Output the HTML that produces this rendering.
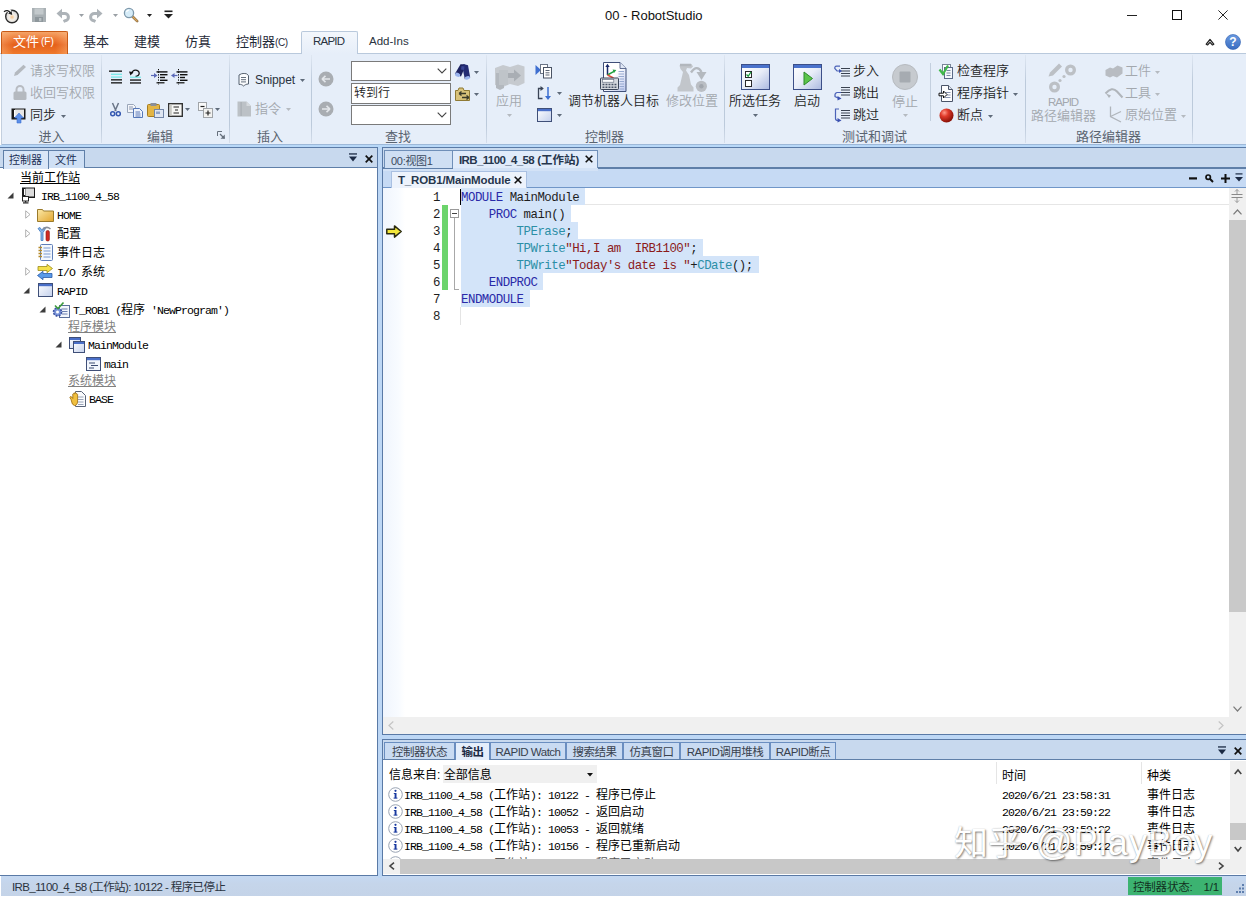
<!DOCTYPE html>
<html lang="zh-CN">
<head>
<meta charset="utf-8">
<title>00 - RobotStudio</title>
<style>
*{box-sizing:border-box;margin:0;padding:0}
html,body{width:1247px;height:897px;overflow:hidden;background:#fff}
body{font-family:"Liberation Sans","Noto Sans CJK SC",sans-serif;font-size:12px;color:#1e1e1e;position:relative}
.abs{position:absolute}
.t{position:absolute;white-space:nowrap;line-height:1}
svg{position:absolute;overflow:visible}
/* title */
#title{left:0;top:0;width:1247px;height:30px;background:#fff}
#tabsrow{left:0;top:30px;width:1247px;height:24px;background:#fff}
#ribbon{left:0;top:53px;width:1247px;height:92px;background:#e6eef9;border-top:1px solid #b9c9dc;border-bottom:1px solid #9db8d8}
.rsep{position:absolute;top:55px;width:1px;height:88px;background:linear-gradient(180deg,#dfe7f2,#bccadb 30%,#bccadb 80%,#d5deeb)}
.glabel{position:absolute;top:130px;font-size:13px;color:#5a6470;line-height:1;white-space:nowrap;transform:translateX(-50%)}
.rt{position:absolute;white-space:nowrap;line-height:1;font-size:13px;color:#1e1e1e;font-weight:350}
.dis{color:#a3a8ae}
/* frame */
#frame{left:0;top:145px;width:1247px;height:752px;background:#bdd7f5}
.mono{font-family:"Liberation Mono","Noto Sans CJK SC",monospace}
.tree{font-family:"Liberation Mono","Noto Sans CJK SC",monospace;font-size:11.5px;color:#000;position:absolute;white-space:nowrap;line-height:1;letter-spacing:-0.9px}
.tree .c,.orow .c{font-size:12px;letter-spacing:0}
.code{position:absolute;left:461px;height:17px;line-height:17px;font-family:"Liberation Mono",monospace;font-size:12.4px;letter-spacing:-0.49px;white-space:pre;color:#1e1e1e}
.code .x{position:relative;top:2px}
.code span.s{background:#d3e4f9;display:inline-block;height:17px;padding-right:6px}
.kw{color:#2a2aa8}.fn{color:#2b8fa6}.str{color:#8b1a1a}
.ln{position:absolute;left:420px;width:20px;text-align:right;height:17px;line-height:21px;font-family:"Liberation Mono",monospace;font-size:12.4px;letter-spacing:-0.49px;color:#1e1e1e}
.otab{position:absolute;top:742px;height:17px;padding-top:2px;border:1px solid #6a8ec0;border-bottom:none;background:#c9dbf2;font-size:11.5px;color:#39424e;line-height:15px;text-align:center;white-space:nowrap;letter-spacing:-0.5px}
.orow{position:absolute;left:404px;font-family:"Liberation Mono","Noto Sans CJK SC",monospace;font-size:11.5px;letter-spacing:-0.9px;white-space:pre;line-height:1;color:#000}
</style>
</head>
<body>
<div id="title" class="abs"></div>
<div id="tabsrow" class="abs"></div>
<div id="ribbon" class="abs"></div>
<div id="frame" class="abs"></div>
<!--TITLE-->
<svg style="left:3px;top:7px" width="18" height="18" viewBox="0 0 18 18"><defs><radialGradient id="lg" cx="50%" cy="55%" r="50%"><stop offset="0" stop-color="#f6c48a"/><stop offset="0.45" stop-color="#f4efe8"/><stop offset="1" stop-color="#d8d8d8"/></radialGradient></defs><circle cx="9" cy="9.5" r="6.3" fill="url(#lg)" stroke="#2b2b2b" stroke-width="1.4"/><path d="M1.5 4.5 Q5 1.5 8.5 6.5" fill="none" stroke="#fff" stroke-width="3.4"/><path d="M1 4.8 Q4.5 1.8 7.6 6" fill="none" stroke="#222" stroke-width="1.3"/><path d="M5.2 6.6 L9.2 8 L8.6 3.9 Z" fill="#222"/></svg>
<svg style="left:32px;top:8px" width="14" height="14" viewBox="0 0 14 14"><rect x="0" y="0" width="14" height="14" fill="#a9b0b4"/><rect x="2.5" y="0.5" width="9" height="6" fill="#c3c9cc"/><rect x="3" y="9" width="8" height="5" fill="#8e979c"/><rect x="7" y="10" width="2.4" height="3.2" fill="#b9c0c4"/></svg>
<svg style="left:56px;top:8px" width="14" height="14" viewBox="0 0 14 14"><path d="M4 5.5H8.5A3.6 3.6 0 0 1 9 12.8L7.5 13.5" fill="none" stroke="#adb3b8" stroke-width="3"/><path d="M0.5 5.5L6 0.8V10.5Z" fill="#adb3b8"/></svg>
<svg style="left:79px;top:14px" width="5" height="3" viewBox="0 0 7 4"><path d="M0 0H7L3.5 4Z" fill="#9aa0a5"/></svg>
<svg style="left:89px;top:8px" width="14" height="14" viewBox="0 0 14 14"><path d="M10 5.5H5.5A3.6 3.6 0 0 0 5 12.8L6.5 13.5" fill="none" stroke="#adb3b8" stroke-width="3"/><path d="M13.5 5.5L8 0.8V10.5Z" fill="#adb3b8"/></svg>
<svg style="left:113px;top:14px" width="5" height="3" viewBox="0 0 7 4"><path d="M0 0H7L3.5 4Z" fill="#9aa0a5"/></svg>
<svg style="left:123px;top:7px" width="16" height="16" viewBox="0 0 16 16"><path d="M9 9 L14.2 14.2" stroke="#8a6d45" stroke-width="2.6" stroke-linecap="round"/><path d="M9 9 L14 14" stroke="#d9a55c" stroke-width="1.2" stroke-linecap="round"/><circle cx="6" cy="6" r="4.6" fill="#d6ecf8" stroke="#7d98ab" stroke-width="1.3"/><path d="M3.5 5 A3 3 0 0 1 6 3" stroke="#fff" stroke-width="1.2" fill="none"/></svg>
<svg style="left:147px;top:14px" width="5" height="3" viewBox="0 0 7 4"><path d="M0 0H7L3.5 4Z" fill="#222"/></svg>
<svg style="left:164px;top:10px" width="9" height="9" viewBox="0 0 9 9"><rect x="0.5" y="0.5" width="8" height="1.6" fill="#222"/><path d="M0 4H9L4.5 8.5Z" fill="#222"/></svg>
<div class="t" style="left:605px;top:9px;font-size:13px;color:#111">00 - RobotStudio</div>
<div class="abs" style="left:1127px;top:15px;width:10px;height:1px;background:#222"></div>
<svg style="left:1172px;top:10px" width="10" height="10" viewBox="0 0 10 10"><rect x="0.5" y="0.5" width="9" height="9" fill="none" stroke="#111" stroke-width="1"/></svg>
<svg style="left:1218px;top:10px" width="10" height="10" viewBox="0 0 12 12"><path d="M0.5 0.5L11.5 11.5M11.5 0.5L0.5 11.5" stroke="#111" stroke-width="1.1"/></svg>

<!--TABS-->
<div class="abs" style="left:1px;top:31px;width:67px;height:23px;border:1px solid #c85a16;border-bottom:none;border-radius:2px 2px 0 0;background:linear-gradient(90deg,rgba(255,200,150,0.35),rgba(255,200,150,0) 18%,rgba(255,200,150,0) 82%,rgba(255,200,150,0.35)),linear-gradient(180deg,#f5a468 0%,#ee7d3a 30%,#e5601a 58%,#ef7a2c 100%)"></div>
<div class="t" style="left:13px;top:35px;font-size:13px;color:#fff">文件</div>
<div class="t" style="left:41px;top:37px;font-size:10px;color:#fff">(F)</div>
<div class="t" style="left:83px;top:35px;font-size:13px;color:#1f2a38">基本</div>
<div class="t" style="left:134px;top:35px;font-size:13px;color:#1f2a38">建模</div>
<div class="t" style="left:185px;top:35px;font-size:13px;color:#1f2a38">仿真</div>
<div class="t" style="left:236px;top:35px;font-size:13px;color:#1f2a38">控制器<span style="font-size:10px;font-family:'Liberation Sans',sans-serif;letter-spacing:-0.4px">(C)</span></div>
<div class="abs" style="left:301px;top:31px;width:57px;height:23px;border:1px solid #b9c9dc;border-bottom:none;border-radius:2px 2px 0 0;background:linear-gradient(180deg,#f3f7fc,#e6eef9)"></div>
<div class="t" style="left:313px;top:36px;font-size:11.5px;color:#2a3340;letter-spacing:-0.8px">RAPID</div>
<div class="t" style="left:369px;top:36px;font-size:11.5px;color:#2a3340">Add-Ins</div>
<svg style="left:1205px;top:38px" width="10" height="8" viewBox="0 0 10 8"><path d="M1.2 6.2L5 1.5L8.8 6.2L7.5 7L5 4.3L2.5 7Z" fill="#fff" stroke="#222" stroke-width="1.2" stroke-linejoin="round"/></svg>
<svg style="left:1225px;top:34px" width="16" height="16" viewBox="0 0 16 16"><defs><linearGradient id="hg" x1="0" y1="0" x2="0" y2="1"><stop offset="0" stop-color="#6a9ae0"/><stop offset="1" stop-color="#3a6cc0"/></linearGradient></defs><circle cx="8" cy="8" r="7.5" fill="url(#hg)" stroke="#2a5db0" stroke-width="0.6"/><text x="8" y="12.3" text-anchor="middle" font-family="Liberation Sans, sans-serif" font-weight="bold" font-size="12" fill="#fff">?</text></svg>

<!--RIBBON-->
<div class="rsep" style="left:101px"></div>
<div class="rsep" style="left:229px"></div>
<div class="rsep" style="left:311px"></div>
<div class="rsep" style="left:486px"></div>
<div class="rsep" style="left:724px"></div>
<div class="rsep" style="left:1025px"></div>
<div class="rsep" style="left:1192px"></div>
<div class="abs" style="left:930px;top:63px;width:1px;height:58px;background:#c3cfde"></div>
<div class="abs" style="left:1px;top:54px;width:1px;height:91px;background:#c3cfde"></div>
<div class="glabel" style="left:51.5px">进入</div>
<div class="glabel" style="left:160px">编辑</div>
<div class="glabel" style="left:270px">插入</div>
<div class="glabel" style="left:398px">查找</div>
<div class="glabel" style="left:604.5px">控制器</div>
<div class="glabel" style="left:874.5px">测试和调试</div>
<div class="glabel" style="left:1108.5px">路径编辑器</div>
<svg style="left:13px;top:64px" width="14" height="13" viewBox="0 0 14 13"><path d="M1 12L2 8.5L10.5 0.8L13 3L4.5 11Z" fill="#b4b9bf"/></svg>
<div class="rt dis" style="left:30px;top:64px">请求写权限</div>
<svg style="left:13px;top:85px" width="14" height="15" viewBox="0 0 14 15"><path d="M3.5 7V4.5A3.5 3.5 0 0 1 10.5 4.5V7" fill="none" stroke="#b8bcc2" stroke-width="2"/><rect x="0.5" y="6.5" width="13" height="8.5" rx="1.5" fill="#b4b9bf"/></svg>
<div class="rt dis" style="left:30px;top:86px">收回写权限</div>
<svg style="left:11px;top:108px" width="15" height="16" viewBox="0 0 15 16"><rect x="0.5" y="0.5" width="14" height="11" fill="#1a1a1a"/><rect x="4" y="1.5" width="9" height="8" fill="#e6e6e6"/><rect x="3" y="2" width="1.2" height="7" fill="#fff"/><path d="M8 5L12.5 10H10V15H6V10H3.5Z" fill="#5b8fe8" stroke="#3d6fd0" stroke-width="0.6"/></svg>
<div class="rt" style="left:30px;top:108px">同步</div>
<svg style="left:61px;top:115px" width="5" height="3" viewBox="0 0 5 3"><path d="M0 0H5L2.5 3Z" fill="#5f6b7a"/></svg>
<svg style="left:109px;top:70px" width="14" height="14" viewBox="0 0 14 14"><rect x="0" y="0.5" width="13" height="1.3" fill="#111"/><rect x="2" y="3.6" width="11" height="1.4" fill="#7fe9e9"/><rect x="2" y="6.4" width="11" height="1.4" fill="#7fe9e9"/><rect x="2" y="9.2" width="11" height="1.3" fill="#111"/><rect x="2" y="12.2" width="11" height="1.3" fill="#111"/></svg>
<svg style="left:129px;top:69px" width="13" height="15" viewBox="0 0 13 15"><path d="M3 4.5A3.6 3.2 0 1 1 6.5 7.5" fill="none" stroke="#111" stroke-width="1.3"/><path d="M0 2.5L4.5 3L1.5 6.5Z" fill="#111"/><rect x="1" y="7.6" width="11" height="1.3" fill="#7fe9e9"/><rect x="1" y="10.4" width="11" height="1.3" fill="#111"/><rect x="1" y="13.3" width="11" height="1.3" fill="#111"/></svg>
<svg style="left:151px;top:69px" width="17" height="16" viewBox="0 0 17 16"><path d="M0 6.5H4" stroke="#5a68b8" stroke-width="1.2"/><path d="M3 4L6.5 6.5L3 9Z" fill="#5a68b8"/><path d="M7.5 0V16" stroke="#111" stroke-width="1" stroke-dasharray="1.3 1.3"/><rect x="5.5" y="2.2" width="11" height="1.4" fill="#111"/><rect x="9" y="5" width="7.5" height="1.4" fill="#111"/><rect x="9" y="7.8" width="5" height="1.4" fill="#111"/><rect x="9" y="10.6" width="7.5" height="1.4" fill="#111"/><rect x="5.5" y="13.2" width="8" height="1.2" fill="#111"/></svg>
<svg style="left:171px;top:69px" width="17" height="16" viewBox="0 0 17 16"><path d="M2.5 6.5H6.5" stroke="#5a68b8" stroke-width="1.2"/><path d="M3.5 4L0 6.5L3.5 9Z" fill="#5a68b8"/><path d="M7.5 0V16" stroke="#111" stroke-width="1" stroke-dasharray="1.3 1.3"/><rect x="5.5" y="2.2" width="11" height="1.4" fill="#111"/><rect x="9" y="5" width="7.5" height="1.4" fill="#111"/><rect x="9" y="7.8" width="5" height="1.4" fill="#111"/><rect x="9" y="10.6" width="7.5" height="1.4" fill="#111"/><rect x="5.5" y="13.2" width="8" height="1.2" fill="#111"/></svg>
<svg style="left:110px;top:103px" width="11" height="14" viewBox="0 0 11 14"><path d="M2.5 0L6 8M8.5 0L5 8" stroke="#6b7688" stroke-width="1.5" fill="none"/><circle cx="2.7" cy="10.8" r="2" fill="none" stroke="#3558b0" stroke-width="1.5"/><circle cx="8.3" cy="10.8" r="2" fill="none" stroke="#3558b0" stroke-width="1.5"/></svg>
<svg style="left:127px;top:104px" width="16" height="14" viewBox="0 0 16 14"><path d="M0.5 0.5H6.5L8.5 2.5V8.5H0.5Z" fill="#f4f6fa" stroke="#9aa6ba" stroke-width="1"/><path d="M2 3H6M2 5H7" stroke="#7f8da8" stroke-width="0.9"/><path d="M6.5 4.5H12.5L15.5 7.5V13.5H6.5Z" fill="#eef3fb" stroke="#5577b8" stroke-width="1"/><path d="M8.5 8H13M8.5 10H13.5M8.5 12H13.5" stroke="#4a6cb0" stroke-width="0.9"/></svg>
<svg style="left:147px;top:103px" width="17" height="15" viewBox="0 0 17 15"><rect x="0.5" y="1.5" width="12" height="12" rx="1" fill="#e3b545" stroke="#a67c1f" stroke-width="1"/><rect x="3.5" y="0" width="6" height="3" fill="#8b8f99"/><rect x="7.5" y="6.5" width="9" height="8" fill="#dfe6f2" stroke="#7386a8" stroke-width="1"/><rect x="9" y="8.5" width="4" height="2.5" fill="#8fa3c8"/></svg>
<svg style="left:168px;top:103px" width="15" height="14" viewBox="0 0 15 14"><rect x="0.7" y="0.7" width="13.6" height="12.6" fill="#f6f6f4" stroke="#333" stroke-width="1.4"/><rect x="1.4" y="1.4" width="2.4" height="11.2" fill="#c9c9c4"/><path d="M5.5 4H11M7 7H10M5.5 10H11" stroke="#222" stroke-width="1.2"/></svg>
<svg style="left:198px;top:102px" width="15" height="16" viewBox="0 0 15 16"><rect x="0.5" y="0.5" width="8" height="8" fill="#fafafa" stroke="#a0a4a8" stroke-width="1"/><path d="M2.5 4.5H6.5" stroke="#222" stroke-width="1.2"/><rect x="5.5" y="6.5" width="9" height="9" fill="#f2f2f0" stroke="#a0a4a8" stroke-width="1"/><path d="M7.5 11H12.5M10 8.5V13.5" stroke="#222" stroke-width="1.2"/></svg>
<svg style="left:217px;top:131px" width="8" height="8" viewBox="0 0 8 8"><path d="M0.5 5V0.5H5" fill="none" stroke="#66707c" stroke-width="1"/><path d="M3 3L7.5 7.5" stroke="#66707c" stroke-width="1.2"/><path d="M7.8 3.5V7.8H3.5Z" fill="#66707c"/></svg>
<svg style="left:185px;top:108px" width="5" height="3" viewBox="0 0 5 3"><path d="M0 0H5L2.5 3Z" fill="#5f6b7a"/></svg>
<svg style="left:215px;top:108px" width="5" height="3" viewBox="0 0 5 3"><path d="M0 0H5L2.5 3Z" fill="#5f6b7a"/></svg>
<svg style="left:238px;top:73px" width="12" height="14" viewBox="0 0 12 14"><path d="M2 1.5C3.5 0.3 6.5 0.3 8.5 0.8L10.5 2.5V11C8 11 7 12 5.5 13C4.5 12 3 11 1 11.5V2C1.3 1.8 1.6 1.7 2 1.5Z" fill="#fbfcfe" stroke="#55606e" stroke-width="1"/><path d="M3 4.5H8M3 6.7H8M3 8.9H8" stroke="#55606e" stroke-width="0.9"/></svg>
<div class="rt" style="left:255px;top:74px;font-size:12px;color:#2a3340;letter-spacing:-0.1px">Snippet</div>
<svg style="left:237px;top:101px" width="15" height="16" viewBox="0 0 15 16"><path d="M0.5 0.5H9.5L14 5V15.5H0.5Z" fill="#bcc1c6"/><path d="M9.5 0.5V5H14Z" fill="#d5d9dd"/><rect x="3.5" y="1" width="1.2" height="14" fill="#a9aeb4"/></svg>
<div class="rt dis" style="left:255px;top:102px">指令</div>
<svg style="left:300px;top:79px" width="5" height="3" viewBox="0 0 5 3"><path d="M0 0H5L2.5 3Z" fill="#5f6b7a"/></svg>
<svg style="left:286px;top:108px" width="5" height="3" viewBox="0 0 5 3"><path d="M0 0H5L2.5 3Z" fill="#b5bac0"/></svg>
<svg style="left:318px;top:71px" width="16" height="16" viewBox="0 0 16 16"><circle cx="8" cy="8" r="7.5" fill="#a9adb2"/><path d="M4 8H12M4 8L7.5 4.8M4 8L7.5 11.2" stroke="#e3e6ea" stroke-width="1.6" fill="none"/></svg>
<svg style="left:318px;top:101px" width="16" height="16" viewBox="0 0 16 16"><circle cx="8" cy="8" r="7.5" fill="#a9adb2"/><path d="M4 8H12M12 8L8.5 4.8M12 8L8.5 11.2" stroke="#e3e6ea" stroke-width="1.6" fill="none"/></svg>
<div class="abs" style="left:351px;top:61px;width:100px;height:20px;background:#fff;border:1px solid #7a7a7a"></div>
<div class="abs" style="left:351px;top:83px;width:100px;height:21px;background:#fff;border:1px solid #7a7a7a"></div>
<div class="abs" style="left:351px;top:105px;width:100px;height:20px;background:#fff;border:1px solid #7a7a7a"></div>
<div class="rt" style="left:354px;top:87px;font-size:12px;color:#222">转到行</div>
<svg style="left:437px;top:68px" width="10" height="6" viewBox="0 0 10 6"><path d="M0.7 0.7L5 5L9.3 0.7" fill="none" stroke="#444" stroke-width="1.1"/></svg>
<svg style="left:437px;top:112px" width="10" height="6" viewBox="0 0 10 6"><path d="M0.7 0.7L5 5L9.3 0.7" fill="none" stroke="#444" stroke-width="1.1"/></svg>
<svg style="left:454px;top:63px" width="17" height="17" viewBox="0 0 17 17"><path d="M6.5 1.2L10.5 1.2L11 4L7 13.5L0.8 11Z" fill="#1c2260"/><path d="M9.5 1L14 2.2L16.2 14.5L10.8 16.2L9 7Z" fill="#232b74"/><path d="M7.5 3L10.5 3.5L10 7L7 6.5Z" fill="#3a4596"/><ellipse cx="3.6" cy="11.8" rx="2.7" ry="2" transform="rotate(25 3.6 11.8)" fill="#9ab4ee"/><ellipse cx="13.4" cy="14.9" rx="2.6" ry="1.7" transform="rotate(-12 13.4 14.9)" fill="#9ab4ee"/></svg>
<svg style="left:455px;top:87px" width="15" height="14" viewBox="0 0 15 14"><path d="M0.5 3.5H3L4 1H8L9 3.5H14.5V13.5H0.5Z" fill="#d8c27a" stroke="#8f7a35" stroke-width="1"/><path d="M4 6.5H11M4 6.5L6.5 4.5M4 6.5L6.5 8.5" stroke="#3a3a2a" stroke-width="1.3" fill="none"/><path d="M7 10.5H14M14 10.5L11.5 8.5M14 10.5L11.5 12.5" stroke="#3a3a2a" stroke-width="1.3" fill="none"/></svg>
<svg style="left:474px;top:71px" width="5" height="3" viewBox="0 0 5 3"><path d="M0 0H5L2.5 3Z" fill="#5f6b7a"/></svg>
<svg style="left:474px;top:93px" width="5" height="3" viewBox="0 0 5 3"><path d="M0 0H5L2.5 3Z" fill="#5f6b7a"/></svg>
<svg style="left:494px;top:64px" width="31" height="27" viewBox="0 0 31 27"><path d="M1 4L9 1L16 3L24 0.5L30.5 2.5V19L24 22L16 20L9 23L1 21Z" fill="#c6cacf"/><path d="M2 9H10V24L6 26L2 24Z" fill="#b3b8be"/><path d="M5 6H14V21H5Z" fill="#bfc4c9"/><path d="M14 9H20V5.5L27 11.5L20 17.5V14H14Z" fill="#a9aeb4"/></svg>
<div class="rt dis" style="left:496px;top:94px">应用</div>
<svg style="left:506.5px;top:114px" width="5" height="3" viewBox="0 0 5 3"><path d="M0 0H5L2.5 3Z" fill="#b5bac0"/></svg>
<svg style="left:535px;top:64px" width="18" height="15" viewBox="0 0 18 15"><path d="M0.5 1L6 6L0.5 11Z" fill="#3f6fd0"/><rect x="5.5" y="0.5" width="7" height="9" fill="#fff" stroke="#6a7486" stroke-width="1"/><rect x="8.5" y="3.5" width="8" height="10.5" fill="#fff" stroke="#4a5364" stroke-width="1"/><path d="M10.5 6.5H14.5M10.5 8.8H14.5M10.5 11H14.5" stroke="#4a5364" stroke-width="0.9"/></svg>
<svg style="left:537px;top:86px" width="15" height="15" viewBox="0 0 15 15"><path d="M5.5 2.5H1.5V12.5H5.5" fill="none" stroke="#3a4456" stroke-width="1.3"/><path d="M3.5 0L6.8 2.5L3.5 5Z" fill="#3a4456"/><path d="M11 1V12" stroke="#3d6fd0" stroke-width="1.5"/><path d="M8 10L11 14L14 10Z" fill="#3d6fd0"/></svg>
<svg style="left:537px;top:108px" width="15" height="14" viewBox="0 0 15 14"><defs><linearGradient id="wg" x1="0" y1="0" x2="1" y2="1"><stop offset="0" stop-color="#fff"/><stop offset="1" stop-color="#c3d0ec"/></linearGradient></defs><rect x="0.5" y="0.5" width="14" height="13" fill="url(#wg)" stroke="#3f4f78" stroke-width="1"/><rect x="1" y="1" width="13" height="2.2" fill="#4a6fc8"/></svg>
<svg style="left:557px;top:92px" width="5" height="3" viewBox="0 0 5 3"><path d="M0 0H5L2.5 3Z" fill="#5f6b7a"/></svg>
<svg style="left:557px;top:114px" width="5" height="3" viewBox="0 0 5 3"><path d="M0 0H5L2.5 3Z" fill="#5f6b7a"/></svg>
<svg style="left:599px;top:62px" width="28" height="31" viewBox="0 0 28 31"><defs><linearGradient id="pg" x1="0" y1="0" x2="1" y2="1"><stop offset="0.45" stop-color="#ffffff"/><stop offset="1" stop-color="#b9c6ee"/></linearGradient></defs><path d="M4.5 0.5H21L27 6.5V29.5H4.5Z" fill="url(#pg)" stroke="#3f4f78" stroke-width="1"/><path d="M21 0.5V6.5H27" fill="#dfe7f5" stroke="#3f4f78" stroke-width="0.8"/><path d="M19.5 9.5H25M19.5 12H25M19.5 14.5H25M20.5 17H25M20.5 19.5H25M20.5 22H25M20.5 24.5H25M20.5 27H25" stroke="#8fa3cc" stroke-width="0.9"/><path d="M8.5 13V4" stroke="#1a2a6a" stroke-width="1.5"/><path d="M6.3 5L8.5 1.8L10.7 5Z" fill="#1a2a6a"/><path d="M8.5 13L15 9.3" stroke="#22a040" stroke-width="1.5"/><path d="M13.6 7.5L17.3 8L15 11Z" fill="#22a040"/><path d="M8.5 13L14.5 16" stroke="#e04a3a" stroke-width="1.4"/><rect x="1.5" y="16" width="18" height="11.5" rx="0.8" fill="#d4d8de" stroke="#3a4458" stroke-width="1"/><rect x="3.3" y="17.6" width="11.5" height="2.6" fill="#fafbfd" stroke="#5a6478" stroke-width="0.6"/><path d="M3.5 22.6H17.5M3.5 25.2H17.5" stroke="#4a5468" stroke-width="1.5" stroke-dasharray="1.9 1.1"/></svg>
<div class="rt" style="left:568px;top:94px">调节机器人目标</div>
<svg style="left:676px;top:63px" width="33" height="30" viewBox="0 0 33 30"><path d="M1.5 28.5V24.5L4 22L7 9L4.5 6L3.5 2.5L6 1L15.5 1L17 3.5L15 5.5L11 5L10 7.5L13 12L15 21.5L17.5 24.5V28.5Z" fill="#c2c6cb"/><path d="M4 2H15" stroke="#b2b7bd" stroke-width="2.5"/><path d="M15 9.5Q21 1 25.5 9" fill="none" stroke="#b4b9bf" stroke-width="2.4"/><path d="M20.5 9L30.5 9L25.5 17Z" fill="#b4b9bf"/><circle cx="25.4" cy="23.3" r="5.6" fill="#babec4"/><circle cx="25.4" cy="23.3" r="2.2" fill="#a2a7ae"/></svg>
<div class="rt dis" style="left:666px;top:94px">修改位置</div>
<svg style="left:741px;top:64px" width="29" height="26" viewBox="0 0 29 26"><defs><linearGradient id="tg" x1="0" y1="0" x2="1" y2="1"><stop offset="0" stop-color="#fff"/><stop offset="0.5" stop-color="#e8edf8"/><stop offset="1" stop-color="#aab9e0"/></linearGradient></defs><rect x="0.5" y="0.5" width="28" height="25" fill="url(#tg)" stroke="#3c4f88" stroke-width="1"/><rect x="1" y="1" width="27" height="3" fill="#4a72cc"/><rect x="4.5" y="7.5" width="6" height="6" fill="#fff" stroke="#2a2a2a" stroke-width="1"/><path d="M5.5 10.5L7.2 12.3L10 8" stroke="#1a9a3a" stroke-width="1.3" fill="none"/><rect x="4.5" y="16.5" width="6" height="6" fill="#fff" stroke="#2a2a2a" stroke-width="1"/></svg>
<div class="rt" style="left:729px;top:94px">所选任务</div>
<svg style="left:752.5px;top:114px" width="5" height="3" viewBox="0 0 5 3"><path d="M0 0H5L2.5 3Z" fill="#5f6b7a"/></svg>
<svg style="left:793px;top:64px" width="29" height="26" viewBox="0 0 29 26"><rect x="0.5" y="0.5" width="28" height="25" fill="url(#tg)" stroke="#3c4f88" stroke-width="1"/><rect x="1" y="1" width="27" height="3" fill="#4a72cc"/><path d="M11 8L19.5 14.5L11 21Z" fill="#5cc44a" stroke="#2c8a2a" stroke-width="1"/></svg>
<div class="rt" style="left:794px;top:94px">启动</div>
<svg style="left:834px;top:64px" width="17" height="14" viewBox="0 0 17 14"><path d="M7 4.5H16M7 7H16M7 9.5H16M7 12H16" stroke="#3a4250" stroke-width="1"/><path d="M6 2.2H2.5Q0.5 2.2 0.8 4.5L3 7H6.5" fill="none" stroke="#4b62b8" stroke-width="1.2"/><path d="M5 5L8 7L5 9Z" fill="#3a50b0"/></svg>
<div class="rt" style="left:853px;top:64px">步入</div>
<svg style="left:834px;top:86px" width="17" height="15" viewBox="0 0 17 15"><path d="M7 1.5H16M7 4H16M7 6.5H16M7 9H16" stroke="#3a4250" stroke-width="1"/><path d="M7 6.5H3Q0.5 7 1 10.5L4 12" fill="none" stroke="#4b62b8" stroke-width="1.2"/><path d="M3.5 10L7.5 12.5L3.5 14.5Z" fill="#3a50b0"/></svg>
<div class="rt" style="left:853px;top:86px">跳出</div>
<svg style="left:834px;top:108px" width="17" height="15" viewBox="0 0 17 15"><path d="M7 2.5H16M7 5H16M7 7.5H16M7 10H16" stroke="#3a4250" stroke-width="1"/><path d="M5 1H1.5V10.5Q1.5 12.5 4 12.5" fill="none" stroke="#4b62b8" stroke-width="1.2"/><path d="M3.5 10L7.5 12.5L3.5 14.5Z" fill="#3a50b0"/></svg>
<div class="rt" style="left:853px;top:108px">跳过</div>
<svg style="left:892px;top:64px" width="26" height="26" viewBox="0 0 26 26"><circle cx="13" cy="13" r="12.5" fill="#c6cacf" stroke="#b6babf" stroke-width="1"/><rect x="7.5" y="7.5" width="11" height="11" rx="1" fill="#a6abb1"/></svg>
<div class="rt dis" style="left:892px;top:95px">停止</div>
<svg style="left:902.5px;top:114px" width="5" height="3" viewBox="0 0 5 3"><path d="M0 0H5L2.5 3Z" fill="#b5bac0"/></svg>
<svg style="left:939px;top:64px" width="14" height="15" viewBox="0 0 14 15"><rect x="3.5" y="0.5" width="8" height="10" fill="#fff" stroke="#7a8698" stroke-width="1"/><rect x="5.5" y="3.5" width="8" height="11" fill="#f4f7fc" stroke="#5a6a88" stroke-width="1"/><path d="M7.5 6.5H11.5M7.5 9H11.5M7.5 11.5H11.5" stroke="#6a7a98" stroke-width="0.9"/><path d="M0.5 5.5L4 10L9 1.5" fill="none" stroke="#3fb84a" stroke-width="2.2"/></svg>
<div class="rt" style="left:957px;top:64px">检查程序</div>
<svg style="left:939px;top:85px" width="14" height="17" viewBox="0 0 14 17"><path d="M2.5 0.5H9.5L13.5 4.5V16.5H2.5Z" fill="#fdfdfe" stroke="#4a5468" stroke-width="1"/><path d="M9.5 0.5V4.5H13.5" fill="#e0e6f0" stroke="#4a5468" stroke-width="1"/><path d="M6 7.5H11.5M6 10H11.5M6 12.5H11.5" stroke="#7a88a8" stroke-width="0.9"/><path d="M0 8.2H4.5V6L8 9.5L4.5 13V10.8H0Z" fill="#fff" stroke="#111" stroke-width="1"/></svg>
<div class="rt" style="left:957px;top:86px">程序指针</div>
<svg style="left:939px;top:108px" width="15" height="15" viewBox="0 0 15 15"><defs><radialGradient id="rb" cx="35%" cy="30%" r="70%"><stop offset="0" stop-color="#ff9a8a"/><stop offset="0.4" stop-color="#e03a2a"/><stop offset="1" stop-color="#8a1208"/></radialGradient></defs><circle cx="7.5" cy="7.5" r="7" fill="url(#rb)"/></svg>
<div class="rt" style="left:957px;top:108px">断点</div>
<svg style="left:1013px;top:93px" width="5" height="3" viewBox="0 0 5 3"><path d="M0 0H5L2.5 3Z" fill="#5f6b7a"/></svg>
<svg style="left:988px;top:115px" width="5" height="3" viewBox="0 0 5 3"><path d="M0 0H5L2.5 3Z" fill="#5f6b7a"/></svg>
<svg style="left:1048px;top:63px" width="30" height="30" viewBox="0 0 30 30"><circle cx="22.5" cy="7" r="5.5" fill="#bcc0c5"/><circle cx="22.5" cy="7" r="2.2" fill="#e6eef9"/><circle cx="6.5" cy="24" r="5.5" fill="#bcc0c5"/><circle cx="6.5" cy="24" r="2.2" fill="#e6eef9"/><circle cx="12" cy="17.5" r="1.6" fill="#bcc0c5"/><circle cx="16" cy="13.5" r="1.6" fill="#bcc0c5"/><path d="M0.5 13.5L2 9.5L11 0.5L14 3.5L5 12.5Z" fill="#bcc0c5"/></svg>
<div class="rt dis" style="left:1048px;top:97px;font-size:11.5px;letter-spacing:-1px">RAPID</div>
<div class="rt dis" style="left:1031px;top:109px">路径编辑器</div>
<svg style="left:1105px;top:65px" width="18" height="13" viewBox="0 0 18 13"><path d="M0.5 5L5 2.5L8 3.5L12.5 0.5L17.5 2.5V8.5L12 12.5L8 11L5 12.5L0.5 10.5Z" fill="#b8bcc2"/></svg>
<div class="rt dis" style="left:1125px;top:64px">工件</div>
<svg style="left:1105px;top:87px" width="18" height="12" viewBox="0 0 18 12"><path d="M0.5 6.5Q7 -1 12 4.5L17.5 10.5" fill="none" stroke="#b0b5bb" stroke-width="2"/><path d="M1 6.5L6 8.5L4 11Z" fill="#b0b5bb"/></svg>
<div class="rt dis" style="left:1125px;top:86px">工具</div>
<svg style="left:1108px;top:106px" width="14" height="17" viewBox="0 0 14 17"><path d="M2.5 0.5V10.5L13 16" fill="none" stroke="#b0b5bb" stroke-width="1.3"/><path d="M2.5 10.5L13 5.5" fill="none" stroke="#b0b5bb" stroke-width="1.3"/></svg>
<div class="rt dis" style="left:1125px;top:108px">原始位置</div>
<svg style="left:1155px;top:71px" width="5" height="3" viewBox="0 0 5 3"><path d="M0 0H5L2.5 3Z" fill="#b5bac0"/></svg>
<svg style="left:1155px;top:93px" width="5" height="3" viewBox="0 0 5 3"><path d="M0 0H5L2.5 3Z" fill="#b5bac0"/></svg>
<svg style="left:1181px;top:115px" width="5" height="3" viewBox="0 0 5 3"><path d="M0 0H5L2.5 3Z" fill="#b5bac0"/></svg>

<!--LEFT-->
<div class="abs" style="left:0;top:145px;width:1247px;height:3px;background:#b8d8f8"></div>
<div class="abs" style="left:-1px;top:147px;width:379px;height:729px;border:1px solid #5a7aa6;background:#fff"></div>
<div class="abs" style="left:0px;top:148px;width:377px;height:20px;background:#c8d9ee;border-bottom:1px solid #5f7fa8"></div>
<div class="abs" style="left:3px;top:150px;width:46px;height:19px;background:#d9e6f7;border:1px solid #5f7fa8;border-bottom:none"></div>
<div class="abs" style="left:48px;top:150px;width:37px;height:18px;background:#cfe0f5;border:1px solid #5f7fa8;border-bottom:none"></div>
<div class="t" style="left:9px;top:155px;font-size:11px;color:#1b2f55">控制器</div>
<div class="t" style="left:55px;top:155px;font-size:11px;color:#1b2f55">文件</div>
<svg style="left:349px;top:153px" width="8" height="9" viewBox="0 0 8 9"><rect x="0" y="0.3" width="8" height="1.3" fill="#1b2a44"/><path d="M0 3.5H8L4 8.5Z" fill="#1b2a44"/></svg>
<svg style="left:365px;top:155px" width="8" height="8" viewBox="0 0 8 8"><path d="M0.7 0.7L7.3 7.3M7.3 0.7L0.7 7.3" stroke="#111" stroke-width="1.7"/></svg>
<div class="t" style="left:20px;top:173px;font-size:12px;color:#000;text-decoration:underline;text-underline-offset:1px;font-family:'Liberation Mono','Noto Sans CJK SC',monospace">当前工作站</div>
<svg style="left:7px;top:192px" width="7" height="7" viewBox="0 0 7 7"><path d="M6.5 0.5V6.5H0.5Z" fill="#3c3c3c"/></svg>
<svg style="left:25px;top:210px" width="6" height="9" viewBox="0 0 6 9"><path d="M0.7 0.8L5 4.5L0.7 8.2Z" fill="#fff" stroke="#b0b0b0" stroke-width="1"/></svg>
<svg style="left:25px;top:229px" width="6" height="9" viewBox="0 0 6 9"><path d="M0.7 0.8L5 4.5L0.7 8.2Z" fill="#fff" stroke="#b0b0b0" stroke-width="1"/></svg>
<svg style="left:25px;top:267px" width="6" height="9" viewBox="0 0 6 9"><path d="M0.7 0.8L5 4.5L0.7 8.2Z" fill="#fff" stroke="#b0b0b0" stroke-width="1"/></svg>
<svg style="left:23px;top:287px" width="7" height="7" viewBox="0 0 7 7"><path d="M6.5 0.5V6.5H0.5Z" fill="#3c3c3c"/></svg>
<svg style="left:39px;top:306px" width="7" height="7" viewBox="0 0 7 7"><path d="M6.5 0.5V6.5H0.5Z" fill="#3c3c3c"/></svg>
<svg style="left:55px;top:341px" width="7" height="7" viewBox="0 0 7 7"><path d="M6.5 0.5V6.5H0.5Z" fill="#3c3c3c"/></svg>
<svg style="left:21px;top:187px" width="15" height="17" viewBox="0 0 15 17"><rect x="1" y="0.5" width="13" height="10.5" fill="#1c1c1c"/><rect x="4.5" y="1.5" width="8.5" height="8" fill="#dcdcdc"/><rect x="3" y="2" width="1.2" height="6" fill="#fff"/><rect x="1.5" y="9.5" width="6" height="4.5" fill="#fff" stroke="#222" stroke-width="1"/><rect x="2" y="15.3" width="5.5" height="1.2" fill="#222"/><rect x="4" y="14" width="1.2" height="1.5" fill="#222"/></svg>
<svg style="left:37px;top:208px" width="17" height="14" viewBox="0 0 17 14"><defs><linearGradient id="fg" x1="0" y1="0" x2="1" y2="1"><stop offset="0" stop-color="#fbe9a8"/><stop offset="1" stop-color="#e2a52e"/></linearGradient></defs><path d="M0.5 1.5H5.5L6.5 3H16.5V13.5H0.5Z" fill="url(#fg)" stroke="#9a7a2a" stroke-width="1"/></svg>
<svg style="left:37px;top:226px" width="15" height="16" viewBox="0 0 15 16"><path d="M1 2.5L4 6.5V14.5H6V6.5L8.5 2.5L6.8 1.5L5 4.5L3 1.5Z" fill="#8fb8e8" stroke="#3d78c0" stroke-width="0.8"/><path d="M6 3.5Q9.5 -0.5 13.5 3" fill="none" stroke="#8a8f98" stroke-width="1.6"/><rect x="9" y="4.5" width="3.4" height="10.5" rx="1.5" fill="#d02a22" stroke="#8a1510" stroke-width="0.6"/></svg>
<svg style="left:38px;top:244px" width="15" height="17" viewBox="0 0 15 17"><rect x="2.5" y="0.5" width="12" height="16" rx="1" fill="#f3f7fd" stroke="#5f7eb8" stroke-width="1"/><path d="M5.5 4H12.5M5.5 7H12.5M5.5 10H12.5M5.5 13H12.5" stroke="#7d9ad0" stroke-width="1.1"/><path d="M0.5 3.5H4M0.5 6.5H4M0.5 9.5H4M0.5 12.5H4" stroke="#b58a2a" stroke-width="1.3"/></svg>
<svg style="left:37px;top:264px" width="16" height="16" viewBox="0 0 16 16"><path d="M1 2.5H10V0.3L15.5 4.5L10 8.7V6.5H1Z" fill="#f4e04a" stroke="#9a8a1a" stroke-width="0.8"/><path d="M15 9.5H6V7.3L0.5 11.5L6 15.7V13.5H15Z" fill="#5a9ae8" stroke="#2a5aa8" stroke-width="0.8"/></svg>
<svg style="left:38px;top:283px" width="15" height="14" viewBox="0 0 15 14"><rect x="0.5" y="0.5" width="14" height="13" fill="url(#wg)" stroke="#3f4f78" stroke-width="1"/><rect x="1" y="1" width="13" height="2.2" fill="#4a6fc8"/></svg>
<svg style="left:52px;top:302px" width="18" height="16" viewBox="0 0 18 16"><rect x="7.5" y="3.5" width="10" height="12" fill="#f4f7fc" stroke="#5a6f9a" stroke-width="1"/><path d="M9.5 7H15.5M9.5 9.5H15.5M9.5 12H15.5" stroke="#6a7fb0" stroke-width="1"/><circle cx="5.5" cy="10" r="4" fill="#7a94d8" stroke="#3a50a0" stroke-width="1.6" stroke-dasharray="1.8 1.3"/><circle cx="5.5" cy="10" r="1.5" fill="#fff"/><path d="M3 3.5L6 6.5L11.5 0.5" fill="none" stroke="#3c9a3c" stroke-width="1.6"/></svg>
<svg style="left:69px;top:337px" width="16" height="16" viewBox="0 0 16 16"><rect x="0.5" y="0.5" width="11" height="11" fill="url(#wg)" stroke="#3f4f78" stroke-width="1"/><rect x="1" y="1" width="10" height="2" fill="#4a6fc8"/><rect x="4.5" y="4.5" width="11" height="11" fill="url(#wg)" stroke="#3f4f78" stroke-width="1"/><rect x="5" y="5" width="10" height="2" fill="#4a6fc8"/></svg>
<svg style="left:86px;top:357px" width="15" height="14" viewBox="0 0 15 14"><rect x="0.5" y="0.5" width="14" height="13" fill="#f2f6fc" stroke="#3f4f78" stroke-width="1"/><rect x="1" y="1" width="13" height="2.2" fill="#4a6fc8"/><path d="M3 6H9M5 8.5H12M3 11H8" stroke="#3a4a70" stroke-width="1.1"/></svg>
<svg style="left:69px;top:391px" width="17" height="16" viewBox="0 0 17 16"><path d="M6.5 0.5H12.5L16.5 4.5V15.5H6.5Z" fill="#fafbfd" stroke="#5a6478" stroke-width="1"/><path d="M9 6H14.5M9 8.5H14.5M9 11H14.5M9 13.5H14.5" stroke="#8f9ab0" stroke-width="0.9"/><path d="M2 8.5Q0 6 1.5 5.5Q3 5.5 3.8 7.5V3Q4.5 1.8 5.3 3V2Q6.2 0.8 7 2.2V3Q8 2 8.6 3.5V10Q8.5 14.5 5.5 14.5Q3 14.5 2 8.5Z" fill="#f0c040" stroke="#9a6a10" stroke-width="0.8"/></svg>
<div class="tree" style="left:41px;top:191px;">IRB_1100_4_58</div>
<div class="tree" style="left:57px;top:210px;">HOME</div>
<div class="tree" style="left:57px;top:229px;"><span class="c">配置</span></div>
<div class="tree" style="left:57px;top:248px;"><span class="c">事件日志</span></div>
<div class="tree" style="left:57px;top:267px;">I/O <span class="c">系统</span></div>
<div class="tree" style="left:57px;top:286px;">RAPID</div>
<div class="tree" style="left:73px;top:305px;">T_ROB1 (<span class="c">程序</span> 'NewProgram')</div>
<div class="tree" style="left:68px;top:322px;color:#808080;text-decoration:underline;text-underline-offset:1px"><span class="c">程序模块</span></div>
<div class="tree" style="left:88px;top:340px;">MainModule</div>
<div class="tree" style="left:104px;top:359px;">main</div>
<div class="tree" style="left:68px;top:376px;color:#808080;text-decoration:underline;text-underline-offset:1px"><span class="c">系统模块</span></div>
<div class="tree" style="left:89px;top:394px;">BASE</div>

<!--EDITOR-->
<div class="abs" style="left:382px;top:147px;width:866px;height:588px;border:1px solid #5a7aa6;background:#fff"></div>

<div class="abs" style="left:383px;top:148px;width:863px;height:20px;background:#c8d9ee;border-bottom:1px solid #5f7fa8"></div>
<div class="abs" style="left:383px;top:168px;width:863px;height:20px;background:#c6daf4;border-bottom:1px solid #7096c8"></div>
<div class="abs" style="left:384px;top:150px;width:69px;height:18px;background:#cfdff3;border:1px solid #6f8fb8;border-bottom:none"></div>
<div class="t" style="left:391px;top:156px;font-size:11px;color:#3b4a5e;letter-spacing:-0.3px">00:视图1</div>
<div class="abs" style="left:452px;top:150px;width:146px;height:18px;background:#e0ebfa;border:1px solid #6f8fb8;border-bottom:none"></div>
<div class="abs" style="left:383px;top:168px;width:215px;height:3px;background:#d3e2f6"></div>
<div class="abs" style="left:383px;top:168px;width:70px;height:1px;background:#5f7fa8"></div>
<div class="abs" style="left:598px;top:168px;width:648px;height:1px;background:#5f7fa8"></div>
<div class="t" style="left:459px;top:155px;font-size:11.5px;color:#26364d;font-weight:bold"><span style="letter-spacing:-0.62px">IRB_1100_4_58</span> (工作站)</div>
<svg style="left:585px;top:155px" width="8" height="8" viewBox="0 0 8 8"><path d="M0.7 0.7L7.3 7.3M7.3 0.7L0.7 7.3" stroke="#111" stroke-width="1.6"/></svg>
<div class="abs" style="left:391px;top:171px;width:136px;height:17px;background:#edf3fc;border:1px solid #a9c0e2;border-bottom:none"></div>
<div class="t" style="left:398px;top:175px;font-size:11.5px;color:#26364d;font-weight:bold;letter-spacing:-0.15px">T_ROB1/MainModule</div>
<svg style="left:514px;top:176px" width="8" height="8" viewBox="0 0 8 8"><path d="M0.7 0.7L7.3 7.3M7.3 0.7L0.7 7.3" stroke="#111" stroke-width="1.6"/></svg>
<svg style="left:1189px;top:177px" width="8" height="3" viewBox="0 0 8 3"><rect width="8" height="2.2" y="0.3" fill="#111"/></svg>
<svg style="left:1205px;top:174px" width="9" height="9" viewBox="0 0 9 9"><circle cx="3.2" cy="3.2" r="2.2" fill="none" stroke="#111" stroke-width="1.7"/><path d="M4.8 4.8L8 8" stroke="#111" stroke-width="2"/></svg>
<svg style="left:1221px;top:174px" width="9" height="9" viewBox="0 0 9 9"><path d="M0 4.5H9M4.5 0V9" stroke="#111" stroke-width="2"/></svg>
<svg style="left:1235px;top:173px" width="8" height="9" viewBox="0 0 8 9"><rect x="0.5" y="0.3" width="7" height="1.2" fill="#1b2a44"/><path d="M0 4H8L4 8.5Z" fill="#1b2a44"/></svg>
<div class="abs" style="left:383px;top:188px;width:22px;height:529px;background:linear-gradient(90deg,#f0f5fd,#f8fbff 70%,#fff)"></div>
<div class="abs" style="left:461px;top:188px;width:768px;height:17px;border-bottom:1px solid #e6e6e6"></div>
<div class="abs" style="left:460px;top:307px;width:1px;height:18px;background:#e4e4e4"></div>
<div class="abs" style="left:442px;top:205px;width:6px;height:85px;background:#6cd46c"></div>
<div class="abs" style="left:450px;top:209px;width:9px;height:9px;border:1px solid #9a9a9a;background:#fff"></div>
<div class="abs" style="left:452px;top:213px;width:5px;height:1px;background:#444"></div>
<div class="abs" style="left:454px;top:218px;width:1px;height:72px;background:#a8a8a8"></div>
<div class="abs" style="left:454px;top:289px;width:5px;height:1px;background:#a8a8a8"></div>
<svg style="left:386px;top:225px" width="16" height="13" viewBox="0 0 16 13"><path d="M0.8 4.2H8.5V0.9L15.2 6.5L8.5 12.1V8.8H0.8Z" fill="#f2e63a" stroke="#2a2a10" stroke-width="1.5" stroke-linejoin="round"/></svg>
<div class="abs" style="left:460px;top:189px;width:1px;height:16px;background:#000"></div>
<div class="ln" style="top:188px">1</div><div class="code" style="top:188px"><span class="s"><span class="x"><span class="kw">MODULE</span> MainModule</span></span></div>
<div class="ln" style="top:205px">2</div><div class="code" style="top:205px"><span class="s"><span class="x">    <span class="kw">PROC</span> main()</span></span></div>
<div class="ln" style="top:222px">3</div><div class="code" style="top:222px"><span class="s"><span class="x">        <span class="fn">TPErase</span>;</span></span></div>
<div class="ln" style="top:239px">4</div><div class="code" style="top:239px"><span class="s"><span class="x">        <span class="fn">TPWrite</span><span class="str">"Hi,I am  IRB1100"</span>;</span></span></div>
<div class="ln" style="top:256px">5</div><div class="code" style="top:256px"><span class="s"><span class="x">        <span class="fn">TPWrite</span><span class="str">"Today's date is "</span>+<span class="fn">CDate</span>();</span></span></div>
<div class="ln" style="top:273px">6</div><div class="code" style="top:273px"><span class="s"><span class="x">    <span class="kw">ENDPROC</span></span></span></div>
<div class="ln" style="top:290px">7</div><div class="code" style="top:290px"><span class="s"><span class="x"><span class="kw">ENDMODULE</span></span></span></div>
<div class="ln" style="top:307px">8</div><div class="code" style="top:307px"></div>
<div class="abs" style="left:1229px;top:188px;width:17px;height:529px;background:#f0f0f0"></div>
<div class="abs" style="left:1229px;top:220px;width:17px;height:392px;background:#c9c9c9"></div>
<svg style="left:1231px;top:189px" width="12" height="14" viewBox="0 0 12 14"><path d="M0.5 5.5H11.5M0.5 8.5H11.5" stroke="#8a8a8a" stroke-width="1"/><path d="M6 0.5V5M6 9V13.5M4 2.5L6 0.5L8 2.5M4 11.5L6 13.5L8 11.5" stroke="#9a9a9a" stroke-width="1" fill="none"/></svg>
<svg style="left:1233px;top:209px" width="9" height="6" viewBox="0 0 9 6"><path d="M0.5 5.3L4.5 1L8.5 5.3" fill="none" stroke="#7a7a7a" stroke-width="1.2"/></svg>
<svg style="left:1233px;top:706px" width="9" height="6" viewBox="0 0 9 6"><path d="M0.5 0.7L4.5 5L8.5 0.7" fill="none" stroke="#7a7a7a" stroke-width="1.2"/></svg>
<div class="abs" style="left:383px;top:717px;width:863px;height:17px;background:#f0f0f0"></div>
<svg style="left:388px;top:721px" width="6" height="9" viewBox="0 0 6 9"><path d="M5.3 0.5L1 4.5L5.3 8.5" fill="none" stroke="#c4c4c4" stroke-width="1.2"/></svg>
<svg style="left:1218px;top:721px" width="6" height="9" viewBox="0 0 6 9"><path d="M0.7 0.5L5 4.5L0.7 8.5" fill="none" stroke="#c4c4c4" stroke-width="1.2"/></svg>

<!--OUTPUT-->
<div class="abs" style="left:382px;top:739px;width:866px;height:137px;border:1px solid #5a7aa6;background:#fff"></div>
<div class="abs" style="left:383px;top:740px;width:863px;height:20px;background:#c8d9ee;border-bottom:1px solid #5f7fa8"></div>
<svg style="left:1218px;top:746px" width="8" height="9" viewBox="0 0 8 9"><rect x="0" y="0.3" width="8" height="1.3" fill="#1b2a44"/><path d="M0 3.5H8L4 8.5Z" fill="#1b2a44"/></svg>
<svg style="left:1234px;top:747px" width="8" height="8" viewBox="0 0 8 8"><path d="M0.7 0.7L7.3 7.3M7.3 0.7L0.7 7.3" stroke="#111" stroke-width="1.7"/></svg>
<div class="otab" style="left:384px;width:71px;">控制器状态</div>
<div class="otab" style="left:455px;width:35px;background:#e4eefb;font-weight:bold;color:#1b2a44;height:18px;">输出</div>
<div class="otab" style="left:490px;width:76px;">RAPID Watch</div>
<div class="otab" style="left:566px;width:57px;">搜索结果</div>
<div class="otab" style="left:623px;width:57px;">仿真窗口</div>
<div class="otab" style="left:680px;width:90px;">RAPID调用堆栈</div>
<div class="otab" style="left:770px;width:66px;">RAPID断点</div>
<div class="abs" style="left:443px;top:765px;width:154px;height:18px;background:#f0f0f0"></div>
<div class="t" style="left:389px;top:769px;font-size:12px;color:#000">信息来自: 全部信息</div>
<svg style="left:587px;top:773px" width="6" height="4" viewBox="0 0 6 4"><path d="M0 0H6L3 3.5Z" fill="#111"/></svg>
<div class="abs" style="left:996px;top:762px;width:1px;height:22px;background:#e5e5e5"></div>
<div class="abs" style="left:1141px;top:762px;width:1px;height:22px;background:#e5e5e5"></div>
<div class="t" style="left:1002px;top:770px;font-size:12px;color:#000">时间</div>
<div class="t" style="left:1147px;top:770px;font-size:12px;color:#000">种类</div>
<svg style="left:388px;top:787px" width="15" height="15" viewBox="0 0 15 15"><circle cx="7.5" cy="7.5" r="6.8" fill="#fff" stroke="#9aa4b4" stroke-width="1"/><rect x="6.6" y="6" width="1.9" height="5.2" fill="#1a3aa0"/><rect x="5.8" y="6" width="2" height="1" fill="#1a3aa0"/><rect x="5.6" y="10.6" width="3.8" height="1" fill="#1a3aa0"/><circle cx="7.5" cy="3.8" r="1.1" fill="#1a3aa0"/></svg>
<div class="orow" style="top:790px">IRB_1100_4_58 (<span class="c">工作站</span>): 10122 - <span class="c">程序已停止</span></div>
<div class="orow" style="left:1002px;top:790px">2020/6/21 23:58:31</div>
<div class="orow" style="left:1147px;top:790px"><span class="c">事件日志</span></div>
<svg style="left:388px;top:804px" width="15" height="15" viewBox="0 0 15 15"><circle cx="7.5" cy="7.5" r="6.8" fill="#fff" stroke="#9aa4b4" stroke-width="1"/><rect x="6.6" y="6" width="1.9" height="5.2" fill="#1a3aa0"/><rect x="5.8" y="6" width="2" height="1" fill="#1a3aa0"/><rect x="5.6" y="10.6" width="3.8" height="1" fill="#1a3aa0"/><circle cx="7.5" cy="3.8" r="1.1" fill="#1a3aa0"/></svg>
<div class="orow" style="top:807px">IRB_1100_4_58 (<span class="c">工作站</span>): 10052 - <span class="c">返回启动</span></div>
<div class="orow" style="left:1002px;top:807px">2020/6/21 23:59:22</div>
<div class="orow" style="left:1147px;top:807px"><span class="c">事件日志</span></div>
<svg style="left:388px;top:821px" width="15" height="15" viewBox="0 0 15 15"><circle cx="7.5" cy="7.5" r="6.8" fill="#fff" stroke="#9aa4b4" stroke-width="1"/><rect x="6.6" y="6" width="1.9" height="5.2" fill="#1a3aa0"/><rect x="5.8" y="6" width="2" height="1" fill="#1a3aa0"/><rect x="5.6" y="10.6" width="3.8" height="1" fill="#1a3aa0"/><circle cx="7.5" cy="3.8" r="1.1" fill="#1a3aa0"/></svg>
<div class="orow" style="top:824px">IRB_1100_4_58 (<span class="c">工作站</span>): 10053 - <span class="c">返回就绪</span></div>
<div class="orow" style="left:1002px;top:824px">2020/6/21 23:59:22</div>
<div class="orow" style="left:1147px;top:824px"><span class="c">事件日志</span></div>
<svg style="left:388px;top:838px" width="15" height="15" viewBox="0 0 15 15"><circle cx="7.5" cy="7.5" r="6.8" fill="#fff" stroke="#9aa4b4" stroke-width="1"/><rect x="6.6" y="6" width="1.9" height="5.2" fill="#1a3aa0"/><rect x="5.8" y="6" width="2" height="1" fill="#1a3aa0"/><rect x="5.6" y="10.6" width="3.8" height="1" fill="#1a3aa0"/><circle cx="7.5" cy="3.8" r="1.1" fill="#1a3aa0"/></svg>
<div class="orow" style="top:841px">IRB_1100_4_58 (<span class="c">工作站</span>): 10156 - <span class="c">程序已重新启动</span></div>
<div class="orow" style="left:1002px;top:841px">2020/6/21 23:59:22</div>
<div class="orow" style="left:1147px;top:841px"><span class="c">事件日志</span></div>
<div class="abs" style="left:384px;top:856px;width:846px;height:3px;overflow:hidden"><svg style="left:4px;top:0px" width="15" height="15" viewBox="0 0 15 15"><circle cx="7.5" cy="7.5" r="6.8" fill="#fff" stroke="#9aa4b4" stroke-width="1"/></svg><div class="orow" style="left:20px;top:3px;color:#555">IRB_1100_4_58 (<span class="c">工作站</span>): 10150 - <span class="c">程序已启动</span></div><div class="orow" style="left:763px;top:3px;color:#555"><span class="c">事件日志</span></div></div>
<div class="abs" style="left:1230px;top:761px;width:16px;height:98px;background:#f0f0f0"></div>
<div class="abs" style="left:1230px;top:823px;width:16px;height:17px;background:#c8c8c8"></div>
<svg style="left:1234px;top:768px" width="8" height="7" viewBox="0 0 8 7"><path d="M0.7 6L4 2L7.3 6" fill="none" stroke="#444" stroke-width="1.6"/></svg>
<svg style="left:1234px;top:846px" width="8" height="7" viewBox="0 0 8 7"><path d="M0.7 1L4 5L7.3 1" fill="none" stroke="#444" stroke-width="1.6"/></svg>
<div class="abs" style="left:383px;top:859px;width:863px;height:15px;background:#f0f0f0"></div>
<div class="abs" style="left:400px;top:859px;width:760px;height:15px;background:#c8c8c8"></div>
<svg style="left:388px;top:862px" width="7" height="8" viewBox="0 0 7 8"><path d="M6 0.7L2 4L6 7.3" fill="none" stroke="#444" stroke-width="1.6"/></svg>
<svg style="left:1218px;top:862px" width="7" height="8" viewBox="0 0 7 8"><path d="M1 0.7L5 4L1 7.3" fill="none" stroke="#444" stroke-width="1.6"/></svg>
<div class="t" style="left:954px;top:825px;font-size:34px;color:#fff;opacity:0.88;text-shadow:1px 1px 2px rgba(0,0,0,0.55),0 0 1px rgba(0,0,0,0.3)">知乎<span style="font-size:36px;font-family:'Liberation Sans',sans-serif;letter-spacing:1.1px;margin-left:14px">@PlayBoy</span></div>

<!--STATUS-->
<div class="abs" style="left:0;top:876px;width:1247px;height:21px;background:#fff"></div><div class="abs" style="left:1px;top:876px;width:1245px;height:20px;background:linear-gradient(180deg,#c5d9f2,#c5d5ea 40%,#c4d3e8)"></div><div class="abs" style="left:378px;top:876px;width:4px;height:2px;background:#bdd7f5"></div>
<div class="t" style="left:12px;top:882px;font-size:11.5px;color:#2a3340;letter-spacing:-0.6px">IRB_1100_4_58 (工作站): 10122 - 程序已停止</div>
<div class="abs" style="left:1128px;top:877px;width:94px;height:18px;background:#3cb371"></div>
<div class="t" style="left:1133px;top:882px;font-size:11.5px;color:#12301f;letter-spacing:-0.2px">控制器状态:<span style="margin-left:11px">1/1</span></div>
<svg style="left:1235px;top:884px" width="10" height="10" viewBox="0 0 10 10"><g fill="#5f7fae"><rect x="7" y="0" width="2" height="2"/><rect x="4" y="3.5" width="2" height="2"/><rect x="7" y="3.5" width="2" height="2"/><rect x="1" y="7" width="2" height="2"/><rect x="4" y="7" width="2" height="2"/><rect x="7" y="7" width="2" height="2"/></g></svg>
<div class="abs" style="left:1246px;top:30px;width:1px;height:867px;background:#fff"></div>
<div class="abs" style="left:0;top:54px;width:1px;height:91px;background:#fff"></div>

</body>
</html>
